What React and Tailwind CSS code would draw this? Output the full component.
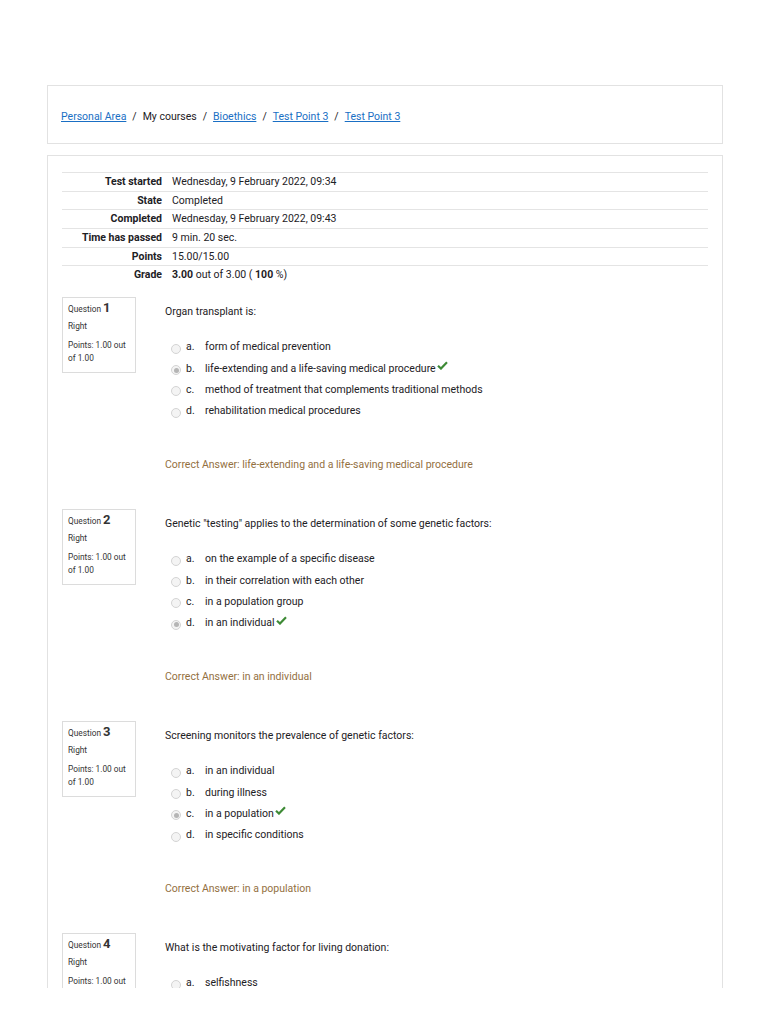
import React from "react";

const summary = [
  { label: "Test started", value: "Wednesday, 9 February 2022, 09:34" },
  { label: "State", value: "Completed" },
  { label: "Completed", value: "Wednesday, 9 February 2022, 09:43" },
  { label: "Time has passed", value: "9 min. 20 sec." },
  { label: "Points", value: "15.00/15.00" },
  {
    label: "Grade",
    value: (
      <>
        <b>3.00</b> out of 3.00 ( <b>100</b> %)
      </>
    ),
  },
];

const questions = [
  {
    num: 1,
    text: "Organ transplant is:",
    options: [
      "form of medical prevention",
      "life-extending and a life-saving medical procedure",
      "method of treatment that complements traditional methods",
      "rehabilitation medical procedures",
    ],
    picked: 1,
    answer: "life-extending and a life-saving medical procedure",
  },
  {
    num: 2,
    text: 'Genetic "testing" applies to the determination of some genetic factors:',
    options: [
      "on the example of a specific disease",
      "in their correlation with each other",
      "in a population group",
      "in an individual",
    ],
    picked: 3,
    answer: "in an individual",
  },
  {
    num: 3,
    text: "Screening monitors the prevalence of genetic factors:",
    options: [
      "in an individual",
      "during illness",
      "in a population",
      "in specific conditions",
    ],
    picked: 2,
    answer: "in a population",
  },
  {
    // last one is cut off by the page edge, only the top part shows
    num: 4,
    text: "What is the motivating factor for living donation:",
    options: ["selfishness"],
    picked: -1,
    partial: true,
  },
];

const Radio = ({ checked }) => (
  <span className="mt-[3px] flex h-[10px] w-[10px] shrink-0 items-center justify-center rounded-full border border-[#d4d4d4] bg-[#f4f4f4]">
    {checked && <span className="h-[5px] w-[5px] rounded-full bg-[#b5b5b5]" />}
  </span>
);

const Check = () => (
  <svg width="11" height="9" viewBox="0 0 12 10" className="-mt-[6px] ml-[1px]">
    <path d="M1 5.2 L4.3 8.4 L11 1.4" fill="none" stroke="#3d8a35" strokeWidth="2.4" />
  </svg>
);

const Question = ({ q }) => (
  <div className="flex h-[212px]">
    <div className="h-[76px] w-[74px] shrink-0 border border-[#dcdcdc] px-[5px] pt-[3px] text-[8.3px] text-[#333]">
      <div className="h-[14px] leading-[14px]">
        Question <span className="text-[13px] font-bold">{q.num}</span>
      </div>
      <div className="mt-[5px] leading-[12px]">Right</div>
      <div className="mt-[7px] leading-[13px]">
        Points: 1.00 out
        {!q.partial && (
          <>
            <br />
            of 1.00
          </>
        )}
      </div>
    </div>
    <div className="ml-[29px] text-[10.5px] text-[#1d2125]">
      <div className="mt-[8px] leading-[14px]">{q.text}</div>
      <div className="mt-[17.5px] pl-[6px]">
        {q.options.map((o, i) => (
          <div key={i} className="flex h-[21.3px] items-center">
            <Radio checked={i === q.picked} />
            <span className="ml-[5px] w-[19px]">{"abcd"[i]}.</span>
            <span>{o}</span>
            {i === q.picked && <Check />}
          </div>
        ))}
      </div>
      {q.answer && (
        <div className="mt-[36px] leading-[14px] text-[#93703f]">
          Correct Answer: {q.answer}
        </div>
      )}
    </div>
  </div>
);

export default function App() {
  return (
    <div className="min-h-screen bg-white pt-[85px] pl-[47px] pr-[45px] font-['Roboto',sans-serif] text-[#1d2125]">
      <div className="flex h-[59px] items-center border border-[#e2e2e2] px-[13px] pt-[4px] text-[10.5px]">
        <a href="#" className="text-[#1a6fc4] underline">Personal Area</a>
        <span className="mx-[6px]">/</span>
        <span>My courses</span>
        <span className="mx-[6px]">/</span>
        <a href="#" className="text-[#1a6fc4] underline">Bioethics</a>
        <span className="mx-[6px]">/</span>
        <a href="#" className="text-[#1a6fc4] underline">Test Point 3</a>
        <span className="mx-[6px]">/</span>
        <a href="#" className="text-[#1a6fc4] underline">Test Point 3</a>
      </div>

      <div className="mt-[11px] h-[833px] overflow-hidden border-x border-t border-[#e2e2e2] px-[14px] pt-[16px]">
        <div className="text-[10.5px]">
          {summary.map((r, i) => (
            <div key={i} className="flex h-[18.7px] items-center border-t border-[#e4e4e4]">
              <div className="w-[100px] text-right font-bold">{r.label}</div>
              <div className="pl-[10px]">{r.value}</div>
            </div>
          ))}
        </div>
        <div className="mt-[13px]">
          {questions.map((q) => (
            <Question key={q.num} q={q} />
          ))}
        </div>
      </div>
    </div>
  );
}
